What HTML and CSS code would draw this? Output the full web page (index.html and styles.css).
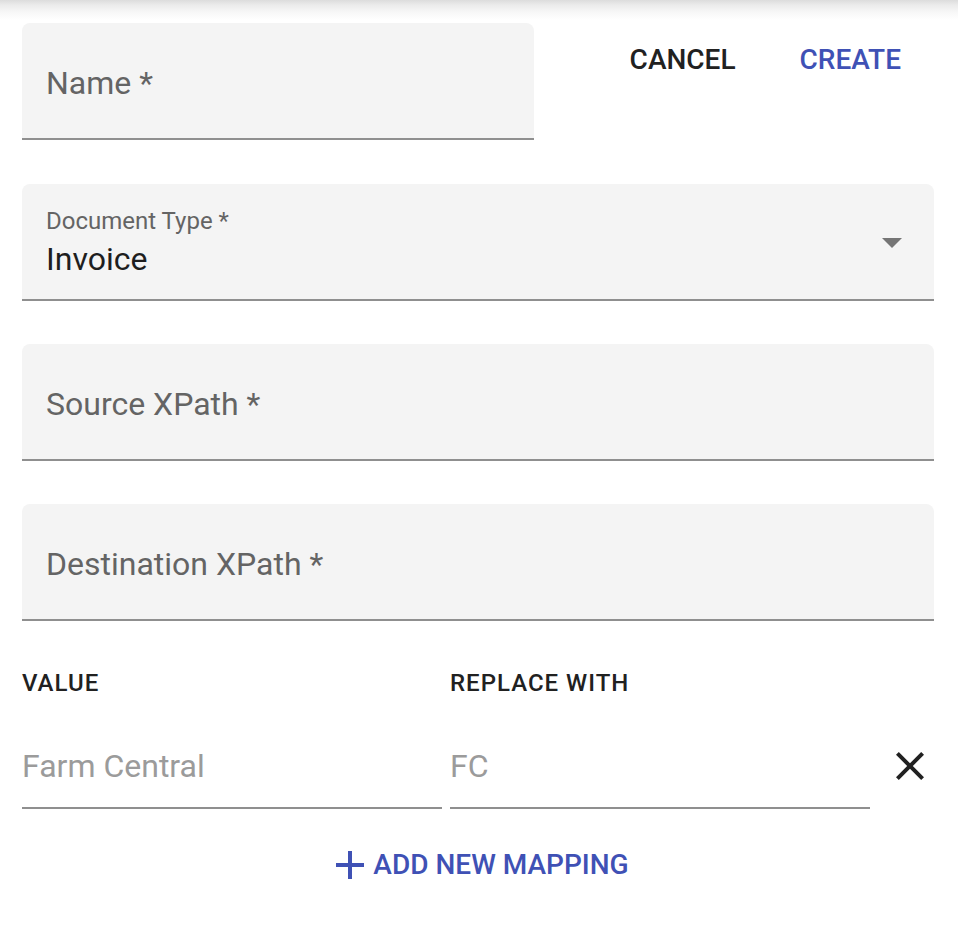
FILE: index.html
```html
<!DOCTYPE html>
<html lang="en">
<head>
<meta charset="utf-8">
<title>Create Mapping</title>
<link rel="stylesheet" href="styles.css">
</head>
<body>
<div class="shade"></div>
<form class="form">
  <div class="top-row">
    <div class="field field-name">
      <span class="label">Name *</span>
    </div>
    <div class="actions">
      <button type="button" class="btn btn-cancel">Cancel</button>
      <button type="button" class="btn btn-create">Create</button>
    </div>
  </div>

  <div class="field field-select">
    <span class="label-small">Document Type *</span>
    <span class="value">Invoice</span>
    <svg class="arrow" viewBox="0 0 24 24" width="48" height="48"><path d="M7 10l5 5 5-5z" fill="#757575"/></svg>
  </div>

  <div class="field field-gap">
    <span class="label">Source XPath *</span>
  </div>

  <div class="field field-gap">
    <span class="label">Destination XPath *</span>
  </div>

  <div class="map-head">
    <span class="col-title">Value</span>
    <span class="col-title">Replace with</span>
  </div>

  <div class="map-row">
    <div class="line-input"><span class="placeholder">Farm Central</span></div>
    <div class="line-input"><span class="placeholder">FC</span></div>
    <svg class="close" viewBox="0 0 24 24" width="48" height="48"><path d="M19 6.41L17.59 5 12 10.59 6.41 5 5 6.41 10.59 12 5 17.59 6.41 19 12 13.41 17.59 19 19 17.59 13.41 12z" fill="#212121"/></svg>
  </div>

  <div class="add-row">
    <button type="button" class="btn-add">
      <svg viewBox="0 0 24 24" width="48" height="48"><path d="M19 13h-6v6h-2v-6H5v-2h6V5h2v6h6v2z" fill="#3f51b5"/></svg>
      <span>Add new mapping</span>
    </button>
  </div>
</form>
</body>
</html>
```

FILE: styles.css
```css
html, body {
  margin: 0;
  padding: 0;
  background: #ffffff;
}
body {
  font-family: Roboto, "Liberation Sans", Arial, sans-serif;
  width: 958px;
  overflow: hidden;
}
.shade {
  height: 20px;
  background: linear-gradient(to bottom, #dcdcdc 0, #ebebeb 5px, #f7f7f7 12px, #ffffff 20px);
}
.form {
  padding: 3px 24px 0 22px;
}
.top-row {
  display: flex;
  align-items: flex-start;
}
.field {
  box-sizing: border-box;
  position: relative;
  height: 117px;
  background: #f4f4f4;
  border-radius: 8px 8px 0 0;
  border-bottom: 2px solid #8f8f8f;
  padding: 44px 24px 0 24px;
}
.field-name {
  width: 512px;
  flex: none;
}
.label {
  display: block;
  font-size: 32px;
  line-height: 32px;
  color: #646464;
}
.actions {
  flex: 1;
  display: flex;
  justify-content: flex-end;
  gap: 32px;
  padding-right: 17px;
}
.btn {
  font-family: inherit;
  font-size: 28px;
  font-weight: 500;
  line-height: 49px;
  letter-spacing: 0;
  text-transform: uppercase;
  background: none;
  border: none;
  padding: 12px 16px;
  margin: 0;
  cursor: pointer;
}
.btn-cancel { color: #212121; }
.btn-create { color: #3f51b5; }

.field-select {
  margin-top: 44px;
  padding-top: 25px;
}
.label-small {
  display: block;
  font-size: 24px;
  line-height: 24px;
  color: #646464;
}
.value {
  display: block;
  margin-top: 10px;
  font-size: 32px;
  line-height: 32px;
  color: #1e1e1e;
}
.arrow {
  position: absolute;
  right: 18px;
  top: 34px;
}
.field-gap {
  margin-top: 43px;
}

.map-head {
  display: flex;
  gap: 8px;
  margin-top: 50px;
  padding-right: 64px;
}
.col-title {
  flex: 1;
  font-size: 24px;
  line-height: 24px;
  font-weight: 500;
  letter-spacing: 1px;
  text-transform: uppercase;
  color: #212121;
}

.map-row {
  display: flex;
  align-items: flex-start;
  gap: 8px;
  margin-top: 47px;
}
.line-input {
  box-sizing: border-box;
  width: 420px;
  flex: none;
  padding: 8px 0 25px 0;
  border-bottom: 2px solid #8f8f8f;
}
.placeholder {
  display: block;
  font-size: 32px;
  line-height: 32px;
  color: #9b9b9b;
}
.close {
  display: block;
  margin-left: 8px;
  flex: none;
}

.add-row {
  display: flex;
  justify-content: center;
  margin-top: 31px;
}
.btn-add {
  display: inline-flex;
  align-items: center;
  height: 49px;
  padding: 0;
  margin: 0 0 0 9px;
  border: none;
  background: none;
  font-family: inherit;
  font-size: 28px;
  font-weight: 500;
  letter-spacing: 0;
  text-transform: uppercase;
  color: #3f51b5;
  cursor: pointer;
}
.btn-add svg {
  display: block;
  margin: 0 -1px 0 -10px;
}
```
